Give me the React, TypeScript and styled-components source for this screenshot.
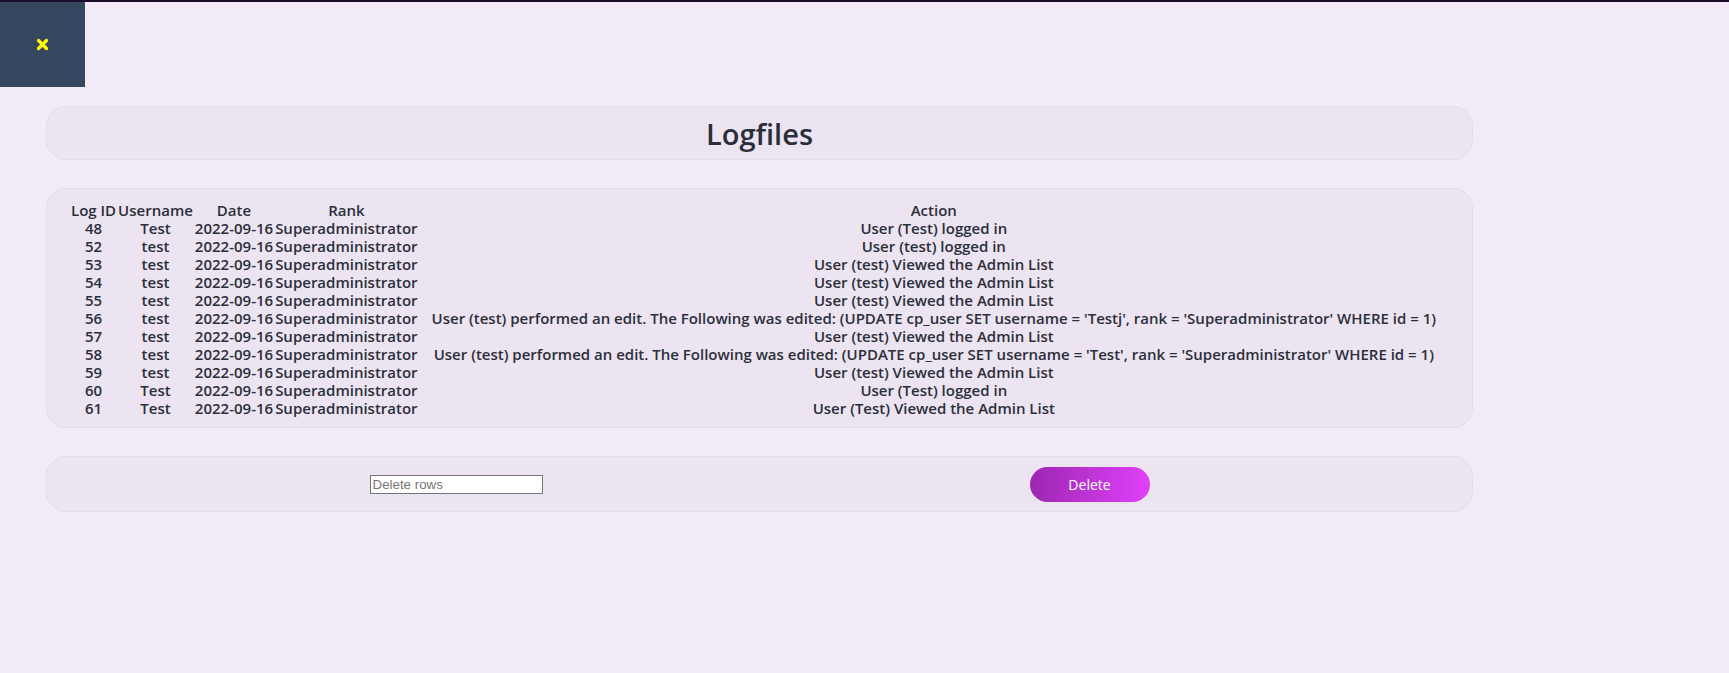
import React, { FC } from 'react';
import styled, { createGlobalStyle } from 'styled-components';

interface ILogRow {
	id: number;
	username: string;
	date: string;
	rank: string;
	action: string;
}

const logs: ILogRow[] = [
	{ id: 48, username: 'Test', date: '2022-09-16', rank: 'Superadministrator', action: 'User (Test) logged in' },
	{ id: 52, username: 'test', date: '2022-09-16', rank: 'Superadministrator', action: 'User (test) logged in' },
	{ id: 53, username: 'test', date: '2022-09-16', rank: 'Superadministrator', action: 'User (test) Viewed the Admin List' },
	{ id: 54, username: 'test', date: '2022-09-16', rank: 'Superadministrator', action: 'User (test) Viewed the Admin List' },
	{ id: 55, username: 'test', date: '2022-09-16', rank: 'Superadministrator', action: 'User (test) Viewed the Admin List' },
	{
		id: 56,
		username: 'test',
		date: '2022-09-16',
		rank: 'Superadministrator',
		action:
			"User (test) performed an edit. The Following was edited: (UPDATE cp_user SET username = 'Testj', rank = 'Superadministrator' WHERE id = 1)",
	},
	{ id: 57, username: 'test', date: '2022-09-16', rank: 'Superadministrator', action: 'User (test) Viewed the Admin List' },
	{
		id: 58,
		username: 'test',
		date: '2022-09-16',
		rank: 'Superadministrator',
		action:
			"User (test) performed an edit. The Following was edited: (UPDATE cp_user SET username = 'Test', rank = 'Superadministrator' WHERE id = 1)",
	},
	{ id: 59, username: 'test', date: '2022-09-16', rank: 'Superadministrator', action: 'User (test) Viewed the Admin List' },
	{ id: 60, username: 'Test', date: '2022-09-16', rank: 'Superadministrator', action: 'User (Test) logged in' },
	{ id: 61, username: 'Test', date: '2022-09-16', rank: 'Superadministrator', action: 'User (Test) Viewed the Admin List' },
];

const App: FC = () => (
	<>
		<GlobalStyle />
		<TopLine />
		<MenuToggle type="button" aria-label="close menu">
			<svg width="13" height="13" viewBox="0 0 13 13">
				<path d="M2.5 2.5 L10.5 10.5 M10.5 2.5 L2.5 10.5" stroke="#ffff00" strokeWidth="3.2" strokeLinecap="round" />
			</svg>
		</MenuToggle>
		<Main>
			<TitleCard>
				<Title>Logfiles</Title>
			</TitleCard>
			<TableCard>
				<LogTable>
					<thead>
						<tr>
							<HeadCell $shrink>Log ID</HeadCell>
							<HeadCell $shrink>Username</HeadCell>
							<HeadCell $shrink>Date</HeadCell>
							<HeadCell $shrink>Rank</HeadCell>
							<HeadCell>Action</HeadCell>
						</tr>
					</thead>
					<tbody>
						{logs.map((log) => (
							<tr key={log.id}>
								<Cell>{log.id}</Cell>
								<Cell>{log.username}</Cell>
								<Cell>{log.date}</Cell>
								<Cell>{log.rank}</Cell>
								<Cell>{log.action}</Cell>
							</tr>
						))}
					</tbody>
				</LogTable>
			</TableCard>
			<ActionCard>
				<RowsInput type="text" placeholder="Delete rows" />
				<DeleteButton type="button">Delete</DeleteButton>
			</ActionCard>
		</Main>
	</>
);

export default App;

const GlobalStyle = createGlobalStyle`
	html, body {
		margin: 0;
		padding: 0;
		background: #f2eaf6;
		min-height: 100%;
	}
	body {
		font-family: 'Open Sans', 'Noto Sans', sans-serif;
		color: #2b2f3b;
	}
`;

const TopLine = styled('div')`
	height: 2px;
	background: #1b0c29;
`;

const MenuToggle = styled('button')`
	display: flex;
	align-items: center;
	justify-content: center;
	width: 85px;
	height: 85px;
	margin: 0;
	padding: 0 0 0;
	border: none;
	background: #34475f;
	cursor: pointer;
`;

const Main = styled('main')`
	display: flex;
	flex-direction: column;
	gap: 28px;
	width: 1427px;
	margin: 19px 0 0 46px;
`;

const Card = styled('section')`
	box-sizing: border-box;
	background: #ece4f0;
	border: 1px solid #e6dcea;
	border-radius: 20px;
`;

const TitleCard = styled(Card)`
	display: flex;
	align-items: center;
	justify-content: center;
	height: 54px;
`;

const Title = styled('h1')`
	margin: 0;
	font-size: 29px;
	font-weight: 600;
	color: #2a2e3a;
`;

const TableCard = styled(Card)`
	padding: 12px 22px 10px;
`;

const LogTable = styled('table')`
	width: 100%;
	border-collapse: separate;
	border-spacing: 2px 0;
	font-size: 15px;
	font-weight: 600;
	color: #2b2f3b;
`;

const HeadCell = styled('th')<{ $shrink?: boolean }>`
	padding: 0;
	line-height: 18px;
	font-weight: 600;
	text-align: center;
	white-space: nowrap;
	width: ${(p) => (p.$shrink ? '1%' : 'auto')};
`;

const Cell = styled('td')`
	padding: 0;
	line-height: 18px;
	text-align: center;
	white-space: nowrap;
`;

const ActionCard = styled(Card)`
	display: flex;
	align-items: center;
	justify-content: space-around;
	height: 56px;
	padding: 0 79px;
`;

const RowsInput = styled('input')`
	box-sizing: border-box;
	width: 173px;
	height: 19px;
	padding: 1px 2px;
	border: 1px solid #767676;
	border-radius: 0;
	background: #ffffff;
	font-family: 'Liberation Sans', Arial, sans-serif;
	font-size: 13.33px;
	color: #222;
	outline: none;

	&::placeholder {
		color: #767676;
	}
`;

const DeleteButton = styled('button')`
	width: 120px;
	height: 35px;
	border: none;
	border-radius: 18px;
	background: linear-gradient(to right, #9c27b0, #e040fb);
	color: #ffffff;
	font-family: 'Open Sans', 'Noto Sans', sans-serif;
	font-size: 14px;
	font-weight: 500;
	cursor: pointer;
`;
